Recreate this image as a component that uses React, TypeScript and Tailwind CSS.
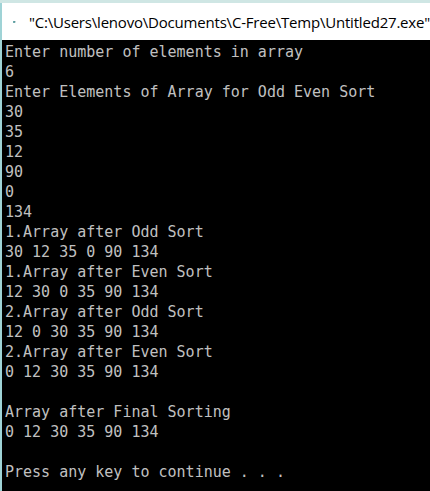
import React from "react";

const lines = [
  "Enter number of elements in array",
  "6",
  "Enter Elements of Array for Odd Even Sort",
  "30",
  "35",
  "12",
  "90",
  "0",
  "134",
  "1.Array after Odd Sort",
  "30 12 35 0 90 134",
  "1.Array after Even Sort",
  "12 30 0 35 90 134",
  "2.Array after Odd Sort",
  "12 0 30 35 90 134",
  "2.Array after Even Sort",
  "0 12 30 35 90 134",
  "",
  "Array after Final Sorting",
  "0 12 30 35 90 134",
  "",
  "Press any key to continue . . .",
];

export default function App() {
  return (
    <div className="w-[430px] h-[491px] overflow-hidden bg-white flex flex-col">
      <div className="h-[3px] bg-[#cfe6e4]" />
      <div className="flex flex-1 min-h-0">
        <div className="w-[2px] bg-[#9fd3d6]" />
        <div className="flex-1 flex flex-col min-w-0">
          <div className="h-[37px] bg-white flex items-center pl-[11px] gap-[13px] pt-[1px]">
            <svg width="20" height="14" viewBox="0 0 20 14">
              <rect x="0.5" y="0.5" width="15" height="12" fill="#3f8a8c" stroke="#9ab" />
              <rect x="2" y="2" width="7" height="9" fill="#6fb6b4" />
              <rect x="17" y="1" width="1.5" height="5" fill="#aaa" />
            </svg>
            <span
              className="text-[15px] text-black whitespace-nowrap tracking-[-0.2px]"
              style={{ fontFamily: '"Open Sans", "Noto Sans", sans-serif' }}
            >
              "C:\Users\lenovo\Documents\C-Free\Temp\Untitled27.exe"
            </span>
          </div>
          <div
            className="flex-1 bg-black text-[#c0c0c0] pl-[3px] pt-[2px] text-[15px] leading-[20px]"
            style={{ fontFamily: '"DejaVu Sans Mono", "Liberation Mono", monospace' }}
          >
            {lines.map((l, i) => (
              <div key={i} className="h-[20px] whitespace-pre">
                {l}
              </div>
            ))}
          </div>
        </div>
      </div>
    </div>
  );
}
